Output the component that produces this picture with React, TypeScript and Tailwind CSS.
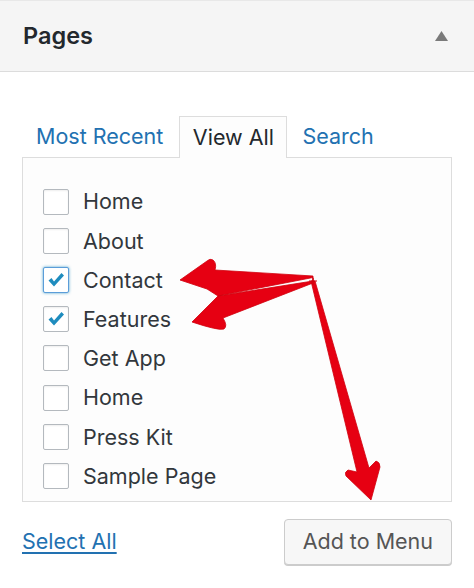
import React from "react";

const PAGES = [
  { label: "Home", checked: false },
  { label: "About", checked: false },
  { label: "Contact", checked: true, focus: true },
  { label: "Features", checked: true },
  { label: "Get App", checked: false },
  { label: "Home", checked: false },
  { label: "Press Kit", checked: false },
  { label: "Sample Page", checked: false },
];

function Checkbox({ checked, focus }: { checked: boolean; focus?: boolean }) {
  return (
    <span
      className={`flex h-[26px] w-[26px] shrink-0 items-center justify-center rounded-[2px] border bg-white ${
        focus
          ? "border-[#5b9dd9] shadow-[0_0_3px_rgba(30,140,190,0.8)]"
          : "border-[#b4b9be] shadow-[inset_0_1px_2px_rgba(0,0,0,0.07)]"
      }`}
    >
      {checked && (
        <svg width="20" height="18" viewBox="0 0 20 18">
          <path
            d="M2.5 9.5 L5.5 7 L8 10.5 L15.5 2 L18 4.5 L8 15.5 Z"
            fill="#1e8cbe"
          />
        </svg>
      )}
    </span>
  );
}

export default function App() {
  return (
    <div
      className="relative min-h-[588px] w-full bg-white text-[#32373c]"
      style={{ fontFamily: "Inter, 'Noto Sans', sans-serif" }}
    >
      {/* Header */}
      <div className="flex h-[72px] items-center justify-between border-y border-t-[#e8e8e8] border-b-[#dcdcdc] bg-[#f5f5f5] pl-[23px] pr-[26px]">
        <span className="text-[23.5px] font-semibold text-[#23282d]">Pages</span>
        <svg width="13" height="10" viewBox="0 0 13 10">
          <path d="M6.5 0 L13 10 L0 10 Z" fill="#7a7a7a" />
        </svg>
      </div>

      <div className="px-[22px]">
        {/* Tabs */}
        <div className="mt-[44px] flex items-end pl-[14px] text-[21.5px]">
          <span className="flex h-[41px] items-center text-[#2271b1]">Most Recent</span>
          <span className="relative z-10 -mb-px ml-[16px] flex h-[42px] items-center border-x border-t border-[#dddddd] bg-[#fdfdfd] px-[12.5px] text-[#23282d]">
            View All
          </span>
          <span className="ml-[15px] flex h-[41px] items-center text-[#2271b1]">Search</span>
        </div>

        {/* Panel */}
        <div className="border border-[#dddddd] bg-[#fdfdfd] pb-[5px] pl-[20px] pt-[24px]">
          {PAGES.map((p, i) => (
            <div key={i} className="flex h-[39.2px] items-center gap-[14px]">
              <Checkbox checked={p.checked} focus={p.focus} />
              <span className="text-[21.5px] text-[#32373c]">{p.label}</span>
            </div>
          ))}
        </div>

        {/* Footer */}
        <div className="mt-[17px] flex items-center justify-between">
          <a className="text-[21.5px] text-[#2271b1] underline underline-offset-[3px]">Select All</a>
          <button className="h-[46px] rounded-[4px] border border-[#cccccc] bg-[#f7f7f7] px-[18px] text-[21.5px] text-[#555555] shadow-[0_1px_0_#cccccc]">
            Add to Menu
          </button>
        </div>
      </div>

      {/* Annotation arrows */}
      <svg
        className="pointer-events-none absolute left-0 top-0"
        width="474"
        height="588"
        viewBox="0 0 474 588"
      >
        <g fill="#e60012" stroke="#d0000e" strokeWidth="0.8" strokeLinejoin="round">
          <path d="M313 276 L215 270 Q217 263 213 260 Q210 258 207 261 L180 280 L207 289 L218 296 L313 277.5 L313 281 L218 296 L192 322 Q219 331 224 329 Q228 326 223 318 L313 283 Z" />
          <path d="M311 281 L315 281 L369 468 L376 461 Q380 462 380 467 L371 500 L346 476 Q344 472 348 470 L357 472 Z" />
          <path d="M309 281 L317 281 M313 278 L313 285" fill="none" strokeWidth="1.2" />
        </g>
      </svg>
    </div>
  );
}
